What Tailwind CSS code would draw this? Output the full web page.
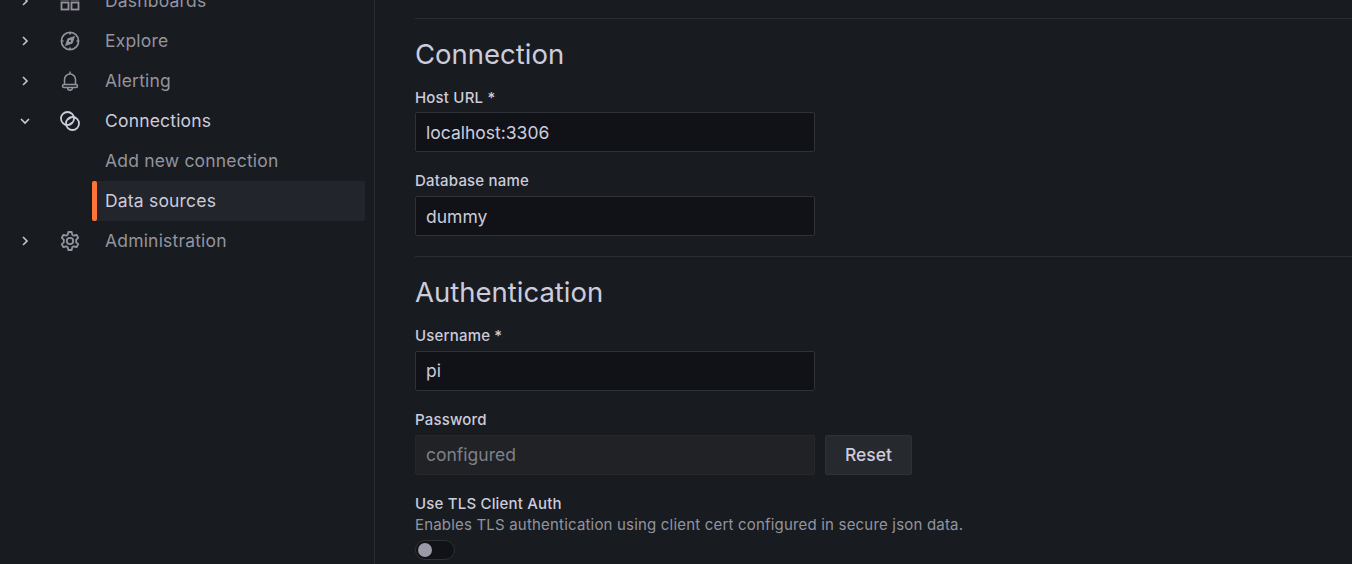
<!doctype html>
<html>
<head>
<meta charset="utf-8">
<script src="https://cdn.jsdelivr.net/npm/@tailwindcss/browser@4"></script>
</head>
<body class="m-0 bg-[#181b1f] font-['Inter',sans-serif] text-[#ccccdc] overflow-hidden">
<div class="flex h-[564px] w-[1352px] overflow-hidden">
  <aside class="w-[375px] h-full shrink-0 border-r border-[#2a2d32] overflow-hidden">
    <div class="-mt-[19px] pr-[9px] text-[17.5px] tracking-[0.1875px] text-[#93949f]">
      <div class="flex items-center h-10">
        <svg class="ml-[20px] w-[10px] h-[10px] text-[#c4c4d2]" viewBox="0 0 10 10" fill="none" stroke="currentColor" stroke-width="1.6"><path d="M3 1l4 4-4 4"/></svg>
        <svg class="ml-[30px] w-5 h-5" viewBox="0 0 20 20" fill="none" stroke="currentColor" stroke-width="1.8"><rect x="1.500" y="1.500" width="7" height="7"/><rect x="11.500" y="1.500" width="7" height="7"/><rect x="1.500" y="11.500" width="7" height="7"/><rect x="11.500" y="11.500" width="7" height="7"/></svg>
        <span class="ml-[25px]">Dashboards</span>
      </div>
      <div class="flex items-center h-10">
        <svg class="ml-[20px] w-[10px] h-[10px] text-[#c4c4d2]" viewBox="0 0 10 10" fill="none" stroke="currentColor" stroke-width="1.6"><path d="M3 1l4 4-4 4"/></svg>
        <svg class="ml-[30px] w-5 h-5" viewBox="0 0 20 20" fill="none" stroke="currentColor" stroke-width="1.7"><circle cx="10" cy="10" r="8.600"/><path d="M10 1.500v2M10 16.500v2M1.500 10h2M16.500 10h2"/><path fill="currentColor" stroke="currentColor" stroke-width="0.8" stroke-linejoin="round" d="M14.500 5.500l-2.300 6.700-6.700 2.300 2.300-6.700z"/><circle cx="10" cy="10" r="1" fill="#181b1f" stroke="none"/></svg>
        <span class="ml-[25px]">Explore</span>
      </div>
      <div class="flex items-center h-10">
        <svg class="ml-[20px] w-[10px] h-[10px] text-[#c4c4d2]" viewBox="0 0 10 10" fill="none" stroke="currentColor" stroke-width="1.6"><path d="M3 1l4 4-4 4"/></svg>
        <svg class="ml-[30px] w-5 h-5" viewBox="0 0 20 20" fill="none" stroke="currentColor" stroke-width="1.5"><path d="M4.500 13.500V8.500a5.500 5.500 0 0 1 11 0V13.500"/><path d="M10 .5v2.500"/><rect x="2.500" y="13.500" width="15" height="3" rx="1.500"/><path d="M7.500 16.800a2.500 2.500 0 0 0 5 0"/></svg>
        <span class="ml-[25px]">Alerting</span>
      </div>
      <div class="flex items-center h-10 text-[#ccccdc]">
        <svg class="ml-[20px] w-[10px] h-[10px]" viewBox="0 0 10 10" fill="none" stroke="currentColor" stroke-width="1.6"><path d="M1 3l4 4 4-4"/></svg>
        <svg class="ml-[30px] w-5 h-5" viewBox="0 0 20 20" fill="none" stroke="currentColor" stroke-width="1.8"><circle cx="7.500" cy="7.500" r="6.500"/><circle cx="12.500" cy="12.500" r="6.500"/><path d="M8 8.500l2.500-1.500M9.500 13l2.500-1.500" stroke-width="1.300"/></svg>
        <span class="ml-[25px]">Connections</span>
      </div>
      <div class="flex items-center h-10 pl-[105px]">Add new connection</div>
      <div class="relative flex items-center h-10 ml-[92px] pl-[13px] bg-[#22252b] rounded-[2px] text-[#ccccdc]">
        <span class="absolute left-0 top-0 bottom-0 w-[5px] rounded-[2px] bg-[#ff7438]"></span>
        Data sources
      </div>
      <div class="flex items-center h-10">
        <svg class="ml-[20px] w-[10px] h-[10px] text-[#c4c4d2]" viewBox="0 0 10 10" fill="none" stroke="currentColor" stroke-width="1.6"><path d="M3 1l4 4-4 4"/></svg>
        <svg class="ml-[30px] w-5 h-5" viewBox="0 0 20 20" fill="none" stroke="currentColor" stroke-width="1.8"><circle cx="10" cy="10" r="3.200"/><path stroke-linejoin="round" d="M8.300 1h3.400l.5 2.700 1.800 1 2.500-.9 1.700 3-2 1.800v2.800l2 1.800-1.700 3-2.500-.9-1.800 1-.5 2.700H8.300l-.5-2.700-1.800-1-2.500.9-1.700-3 2-1.800V8.600l-2-1.800 1.700-3 2.500.9 1.800-1z"/></svg>
        <span class="ml-[25px]">Administration</span>
      </div>
    </div>
  </aside>
  <main class="flex-1 pl-[40px] min-w-0">
    <div class="mt-[18px] border-t border-[#2a2d32]"></div>
    <h3 class="mt-[16px] text-[27.5px] leading-[38px] font-normal">Connection</h3>
    <label class="block mt-[15px] text-[15px] tracking-[0.1875px] leading-[20px] font-medium">Host URL *</label>
    <div class="mt-[4px] flex items-center w-[400px] h-10 px-[10px] pt-[2px] bg-[#111217] border border-[#2e3136] rounded-[2px] text-[17.5px]">localhost:3306</div>
    <label class="block mt-[19px] text-[15px] tracking-[0.1875px] leading-[20px] font-medium">Database name</label>
    <div class="mt-[5px] flex items-center w-[400px] h-10 px-[10px] pt-[2px] bg-[#111217] border border-[#2e3136] rounded-[2px] text-[17.5px]">dummy</div>
    <div class="mt-[20px] border-t border-[#2a2d32]"></div>
    <h3 class="mt-[16px] text-[27.5px] leading-[38px] font-normal">Authentication</h3>
    <label class="block mt-[15px] text-[15px] tracking-[0.1875px] leading-[20px] font-medium">Username *</label>
    <div class="mt-[5px] flex items-center w-[400px] h-10 px-[10px] pt-[1px] bg-[#111217] border border-[#2e3136] rounded-[2px] text-[17.5px]">pi</div>
    <label class="block mt-[19px] text-[15px] tracking-[0.1875px] leading-[20px] font-medium">Password</label>
    <div class="mt-[5px] flex gap-[10px]">
      <div class="flex items-center w-[400px] h-10 px-[10px] pt-[1px] bg-[#202226] border border-[#26282d] rounded-[2px] text-[17.5px] text-[#7f808a]">configured</div>
      <button class="h-10 w-[87px] pt-[1px] bg-[#26292e] border border-[#2e3136] rounded-[2px] text-[17.5px] font-medium">Reset</button>
    </div>
    <label class="block mt-[19px] text-[15px] tracking-[0.1875px] leading-[20px] font-medium">Use TLS Client Auth</label>
    <p class="text-[15px] tracking-[0.1875px] leading-[22px] text-[#93949f]">Enables TLS authentication using client cert configured in secure json data.</p>
    <div class="mt-[4px] relative w-10 h-5 rounded-full bg-[#111217] border border-[#2e3136]">
      <span class="absolute left-[2px] top-[2px] w-[14px] h-[14px] rounded-full bg-[#9a9aa6]"></span>
    </div>
  </main>
</div>
</body>
</html>
